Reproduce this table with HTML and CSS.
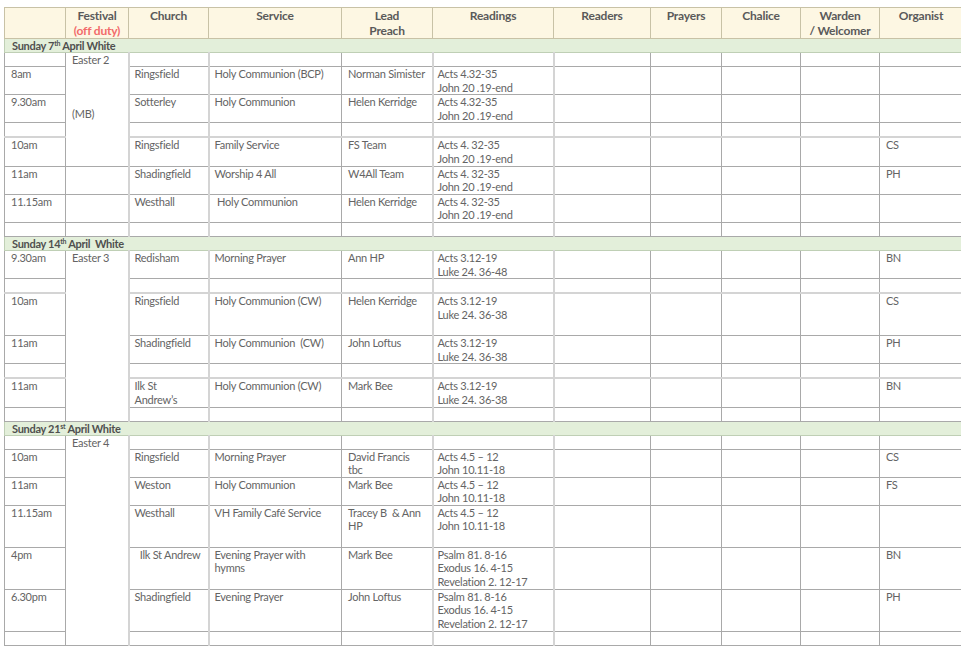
FILE: index.html
```html
<!DOCTYPE html>
<html>
<head>
<meta charset="utf-8">
<link rel="stylesheet" href="styles.css">
</head>
<body>
<table class="rota">
  <colgroup>
    <col class="c-time"><col class="c-fest"><col class="c-church"><col class="c-serv"><col class="c-lead"><col class="c-read"><col class="c-readers"><col class="c-pray"><col class="c-chal"><col class="c-ward"><col class="c-org">
  </colgroup>
  <thead>
    <tr class="head">
      <th></th>
      <th class="fest">Festival<br><span class="off">(off duty)</span></th>
      <th class="lc">Church</th>
      <th class="lc">Service</th>
      <th>Lead<br>Preach</th>
      <th class="lc">Readings</th>
      <th class="lc">Readers</th>
      <th>Prayers</th>
      <th>Chalice</th>
      <th>Warden<br>/ Welcomer</th>
      <th>Organist</th>
    </tr>
  </thead>
  <tbody>
    <tr class="day"><td colspan="11">Sunday 7<sup>th</sup> April White</td></tr>
    <tr class="l1"><td></td><td class="fest" rowspan="5">Easter 2<br><br><br><br>(MB)</td><td class="lc"></td><td class="lc"></td><td></td><td class="lc rd"></td><td class="lc"></td><td></td><td></td><td></td><td></td></tr>
    <tr class="l2"><td>8am</td><td class="lc">Ringsfield</td><td class="lc">Holy Communion (BCP)</td><td>Norman Simister</td><td class="lc rd">Acts 4.32-35<br>John 20 .19-end</td><td class="lc"></td><td></td><td></td><td></td><td></td></tr>
    <tr class="l2"><td>9.30am</td><td class="lc">Sotterley</td><td class="lc">Holy Communion</td><td>Helen Kerridge</td><td class="lc rd">Acts 4.32-35<br>John 20 .19-end</td><td class="lc"></td><td></td><td></td><td></td><td></td></tr>
    <tr class="l1 soft"><td></td><td class="lc"></td><td class="lc"></td><td></td><td class="lc rd"></td><td class="lc"></td><td></td><td></td><td></td><td></td></tr>
    <tr class="l2"><td>10am</td><td class="lc">Ringsfield</td><td class="lc">Family Service</td><td>FS Team</td><td class="lc rd">Acts 4. 32-35<br>John 20 .19-end</td><td class="lc"></td><td></td><td></td><td></td><td>CS</td></tr>
    <tr class="l2"><td>11am</td><td class="fest"></td><td class="lc">Shadingfield</td><td class="lc">Worship 4 All</td><td>W4All Team</td><td class="lc rd">Acts 4. 32-35<br>John 20 .19-end</td><td class="lc"></td><td></td><td></td><td></td><td>PH</td></tr>
    <tr class="l2"><td>11.15am</td><td class="fest"></td><td class="lc">Westhall</td><td class="lc">&nbsp;Holy Communion</td><td>Helen Kerridge</td><td class="lc rd">Acts 4. 32-35<br>John 20 .19-end</td><td class="lc"></td><td></td><td></td><td></td><td></td></tr>
    <tr class="l1"><td></td><td class="fest"></td><td class="lc"></td><td class="lc"></td><td></td><td class="lc rd"></td><td class="lc"></td><td></td><td></td><td></td><td></td></tr>

    <tr class="day"><td colspan="11">Sunday 14<sup>th</sup> April&nbsp; White</td></tr>
    <tr class="l2"><td>9.30am</td><td class="fest" rowspan="7">Easter 3</td><td class="lc">Redisham</td><td class="lc">Morning Prayer</td><td>Ann HP</td><td class="lc rd">Acts 3.12-19<br>Luke 24. 36-48</td><td class="lc"></td><td></td><td></td><td></td><td>BN</td></tr>
    <tr class="l1 soft"><td></td><td class="lc"></td><td class="lc"></td><td></td><td class="lc rd"></td><td class="lc"></td><td></td><td></td><td></td><td></td></tr>
    <tr class="l3"><td>10am</td><td class="lc">Ringsfield</td><td class="lc">Holy Communion (CW)</td><td>Helen Kerridge</td><td class="lc rd">Acts 3.12-19<br>Luke 24. 36-38</td><td class="lc"></td><td></td><td></td><td></td><td>CS</td></tr>
    <tr class="l2"><td>11am</td><td class="lc">Shadingfield</td><td class="lc">Holy Communion&nbsp; (CW)</td><td>John Loftus</td><td class="lc rd">Acts 3.12-19<br>Luke 24. 36-38</td><td class="lc"></td><td></td><td></td><td></td><td>PH</td></tr>
    <tr class="l1 soft"><td></td><td class="lc"></td><td class="lc"></td><td></td><td class="lc rd"></td><td class="lc"></td><td></td><td></td><td></td><td></td></tr>
    <tr class="l2"><td>11am</td><td class="lc">Ilk St<br>Andrew’s</td><td class="lc">Holy Communion (CW)</td><td>Mark Bee</td><td class="lc rd">Acts 3.12-19<br>Luke 24. 36-38</td><td class="lc"></td><td></td><td></td><td></td><td>BN</td></tr>
    <tr class="l1"><td></td><td class="lc"></td><td class="lc"></td><td></td><td class="lc rd"></td><td class="lc"></td><td></td><td></td><td></td><td></td></tr>

    <tr class="day"><td colspan="11">Sunday 21<sup>st</sup> April White</td></tr>
    <tr class="l1"><td></td><td class="fest" rowspan="7">Easter 4</td><td class="lc"></td><td class="lc"></td><td></td><td class="lc rd"></td><td class="lc"></td><td></td><td></td><td></td><td></td></tr>
    <tr class="l2"><td>10am</td><td class="lc">Ringsfield</td><td class="lc">Morning Prayer</td><td>David Francis<br>tbc</td><td class="lc rd">Acts 4.5 – 12<br>John 10.11-18</td><td class="lc"></td><td></td><td></td><td></td><td>CS</td></tr>
    <tr class="l2"><td>11am</td><td class="lc">Weston</td><td class="lc">Holy Communion</td><td>Mark Bee</td><td class="lc rd">Acts 4.5 – 12<br>John 10.11-18</td><td class="lc"></td><td></td><td></td><td></td><td>FS</td></tr>
    <tr class="l3"><td>11.15am</td><td class="lc">Westhall</td><td class="lc">VH Family Café Service</td><td>Tracey B&nbsp; &amp; Ann<br>HP</td><td class="lc rd">Acts 4.5 – 12<br>John 10.11-18</td><td class="lc"></td><td></td><td></td><td></td><td></td></tr>
    <tr class="l3"><td>4pm</td><td class="lc">&nbsp; Ilk St Andrew</td><td class="lc">Evening Prayer with<br>hymns</td><td>Mark Bee</td><td class="lc rd">Psalm 81. 8-16<br>Exodus 16. 4-15<br>Revelation 2. 12-17</td><td class="lc"></td><td></td><td></td><td></td><td>BN</td></tr>
    <tr class="l3"><td>6.30pm</td><td class="lc">Shadingfield</td><td class="lc">Evening Prayer</td><td>John Loftus</td><td class="lc rd">Psalm 81. 8-16<br>Exodus 16. 4-15<br>Revelation 2. 12-17</td><td class="lc"></td><td></td><td></td><td></td><td>PH</td></tr>
    <tr class="l1"><td></td><td class="lc"></td><td class="lc"></td><td></td><td class="lc rd"></td><td class="lc"></td><td></td><td></td><td></td><td></td></tr>
  </tbody>
</table>
</body>
</html>
```

FILE: styles.css
```css
html, body {
  margin: 0;
  background: #ffffff;
}
body {
  padding: 7px 0 0 4px;
  font-family: Lato, "Liberation Sans", sans-serif;
  font-size: 11px;
  letter-spacing: -0.25px;
  color: #646464;
}
.rota {
  border-collapse: collapse;
  table-layout: fixed;
  width: 958px;
}
.c-time { width: 61px; }
.c-fest { width: 63px; }
.c-church { width: 80px; }
.c-serv { width: 133px; }
.c-lead { width: 91px; }
.c-read { width: 121px; }
.c-readers { width: 97px; }
.c-pray { width: 71px; }
.c-chal { width: 79px; }
.c-ward { width: 79px; }
.c-org { width: 83px; }

.rota td, .rota th {
  border: 1px solid #a9a9a9;
  padding: 0 3px 0 6px;
  vertical-align: top;
  text-align: left;
  line-height: 13.6px;
  white-space: nowrap;
  overflow: hidden;
}
.rota td.lc, .rota th.lc {
  border-left: 2px solid #d4d4d4;
  padding-left: 5px;
}
.rota td.rd {
  padding-left: 4px;
}
.rota td.fest {
  padding-left: 6px;
}
.head th {
  background: #fdf7e3;
  border-color: #c8c2a6;
  color: #5a5a5a;
  font-weight: bold;
  font-size: 12px;
  letter-spacing: -0.2px;
  text-align: center;
  padding: 1px 2px 0 2px;
  height: 29px;
  line-height: 14.5px;
}
.head th.lc {
  border-left: 1px solid #c8c2a6;
  padding-left: 2px;
}
.off {
  color: #f26a6a;
}
.day td {
  background: #e3efda;
  border-color: #bfcfb5;
  font-weight: bold;
  color: #4f4f4f;
  font-size: 11px;
  letter-spacing: -0.3px;
  height: 13px;
  line-height: 13px;
  padding-left: 7px;
}
.day sup {
  font-size: 7px;
  line-height: 0;
  vertical-align: 4px;
}
.l1 td { height: 13px; }
.l2 td { height: 27px; }
.l3 td { height: 41px; }
.soft td {
  border-bottom: 2px solid #d4d4d4;
}
```
